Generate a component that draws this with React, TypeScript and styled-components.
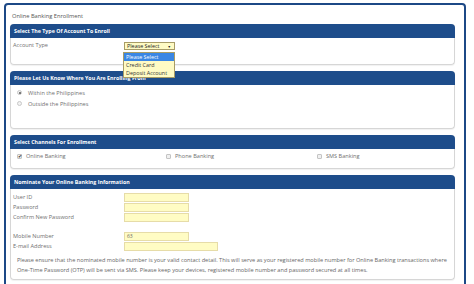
import React from 'react';
import styled, { createGlobalStyle } from 'styled-components';

const GlobalStyle = createGlobalStyle`
  html, body {
    margin: 0;
    padding: 0;
    background: #ffffff;
    font-family: 'Open Sans', 'Liberation Sans', sans-serif;
    overflow: hidden;
  }
  #root {
    height: 284px;
    overflow: hidden;
  }
`;

const Frame = styled.div`
  margin: 3px 0 0 4px;
  width: 462px;
  height: 290px;
  border: 2px solid #1c4886;
  border-radius: 4px;
  padding: 0 9px 0 4px;
  box-sizing: border-box;
`;

const Title = styled.div`
  height: 19px;
  display: flex;
  align-items: center;
  padding: 2px 0 0 2px;
  box-sizing: border-box;
  font-size: 5.7px;
  color: #555;
`;

const Sections = styled.div`
  display: flex;
  flex-direction: column;
  gap: 6px;
`;

const Panel = styled.div`
  border: 1px solid #d6d6d6;
  border-top: none;
  border-radius: 4px;
  box-shadow: 0 1px 1px rgba(0, 0, 0, 0.06);
`;

const PanelHead = styled.div`
  height: 14px;
  margin: 0 -1px;
  background: #1e4d8b;
  color: #fff;
  font-weight: 700;
  font-size: 5.3px;
  display: flex;
  align-items: center;
  padding-left: 4px;
  border-radius: 4px 4px 0 0;
`;

const PanelBody = styled.div<{ $h: number }>`
  height: ${(p) => p.$h}px;
  position: relative;
  box-sizing: border-box;
`;

const Row = styled.div<{ $top?: number }>`
  display: flex;
  align-items: center;
  height: 10px;
  margin-top: ${(p) => p.$top ?? 0}px;
`;

const Label = styled.div`
  width: 111px;
  padding-left: 2px;
  font-size: 5.6px;
  color: #707070;
`;

const Field = styled.div<{ $w?: number }>`
  width: ${(p) => p.$w ?? 65}px;
  height: 9px;
  background: #fffcc4;
  border: 1px solid #e6dca8;
  box-sizing: border-box;
  font-size: 5px;
  color: #666;
  display: flex;
  align-items: center;
  padding-left: 2px;
`;

const SelectBox = styled.div`
  width: 51px;
  height: 8px;
  margin-top: 2px;
  background: #fffbc4;
  border: 1px solid #a89c66;
  box-sizing: border-box;
  font-size: 5.4px;
  color: #222;
  display: flex;
  align-items: center;
  justify-content: space-between;
  padding: 0 3px 0 2px;
`;

const Arrow = styled.span`
  font-size: 3.5px;
  color: #222;
`;

const DropList = styled.div`
  position: absolute;
  left: 112px;
  top: 12px;
  width: 52px;
  background: #fffbc4;
  border: 1px solid #a89c66;
  box-sizing: border-box;
  z-index: 5;
`;

const DropItem = styled.div<{ $active?: boolean }>`
  height: 8px;
  font-size: 5.4px;
  display: flex;
  align-items: center;
  padding-left: 2px;
  background: ${(p) => (p.$active ? '#3a86e4' : 'transparent')};
  color: ${(p) => (p.$active ? '#fff' : '#333')};
`;

const OptionList = styled.div`
  display: flex;
  flex-direction: column;
  padding: 2px 0 0 6px;
`;

const OptionRow = styled.div`
  display: flex;
  align-items: center;
  gap: 6px;
  height: 11px;
  font-size: 5.6px;
  color: #707070;
`;

const Radio = styled.span<{ $on?: boolean }>`
  width: 5px;
  height: 5px;
  border-radius: 50%;
  border: 1px solid #c8c8c8;
  background: #f2f2f2;
  box-sizing: border-box;
  display: flex;
  align-items: center;
  justify-content: center;
  &::after {
    content: '';
    width: 2px;
    height: 2px;
    border-radius: 50%;
    background: ${(p) => (p.$on ? '#555' : 'transparent')};
  }
`;

const Channels = styled.div`
  display: grid;
  grid-template-columns: 149px 151px 1fr;
  padding: 3px 0 0 6px;
`;

const Check = styled.span`
  width: 5px;
  height: 5px;
  border: 1px solid #c4c4c4;
  background: #f0f0f0;
  border-radius: 1px;
  box-sizing: border-box;
  display: inline-flex;
  align-items: center;
  justify-content: center;
  color: #333;
  font-size: 5px;
  line-height: 1;
`;

const ChannelItem = styled.div`
  display: flex;
  align-items: center;
  gap: 4px;
  font-size: 5.6px;
  color: #707070;
`;

const FormBody = styled.div`
  padding-top: 3px;
`;

const Notice = styled.p`
  margin: 4px 0 0 6px;
  font-size: 5.6px;
  line-height: 10px;
  color: #666;
  width: 432px;
`;

export default function App() {
  return (
    <>
      <GlobalStyle />
      <Frame>
        <Title>Online Banking Enrollment</Title>
        <Sections>
          <Panel>
            <PanelHead>Select The Type Of Account To Enroll</PanelHead>
            <PanelBody $h={24}>
              <Row $top={2}>
                <Label>Account Type</Label>
                <SelectBox>
                  Please Select <Arrow>▼</Arrow>
                </SelectBox>
              </Row>
              <DropList>
                <DropItem $active>Please Select</DropItem>
                <DropItem>Credit Card</DropItem>
                <DropItem>Deposit Account</DropItem>
              </DropList>
            </PanelBody>
          </Panel>

          <Panel>
            <PanelHead>Please Let Us Know Where You Are Enrolling From</PanelHead>
            <PanelBody $h={43}>
              <OptionList>
                <OptionRow>
                  <Radio $on />
                  Within the Philippines
                </OptionRow>
                <OptionRow>
                  <Radio />
                  Outside the Philippines
                </OptionRow>
              </OptionList>
            </PanelBody>
          </Panel>

          <Panel>
            <PanelHead>Select Channels For Enrollment</PanelHead>
            <PanelBody $h={19}>
              <Channels>
                <ChannelItem>
                  <Check>✔</Check>
                  Online Banking
                </ChannelItem>
                <ChannelItem>
                  <Check />
                  Phone Banking
                </ChannelItem>
                <ChannelItem>
                  <Check />
                  SMS Banking
                </ChannelItem>
              </Channels>
            </PanelBody>
          </Panel>

          <Panel>
            <PanelHead>Nominate Your Online Banking Information</PanelHead>
            <PanelBody $h={90}>
              <FormBody>
                <Row>
                  <Label>User ID</Label>
                  <Field />
                </Row>
                <Row>
                  <Label>Password</Label>
                  <Field />
                </Row>
                <Row>
                  <Label>Confirm New Password</Label>
                  <Field />
                </Row>
                <Row $top={9}>
                  <Label>Mobile Number</Label>
                  <Field>63</Field>
                </Row>
                <Row>
                  <Label>E-mail Address</Label>
                  <Field $w={94} />
                </Row>
                <Notice>
                  Please ensure that the nominated mobile number is your valid contact detail. This will serve as your registered mobile number for Online Banking transactions where One-Time Password (OTP) will be sent via SMS. Please keep your devices, registered mobile number and password secured at all times.
                </Notice>
              </FormBody>
            </PanelBody>
          </Panel>
        </Sections>
      </Frame>
    </>
  );
}
